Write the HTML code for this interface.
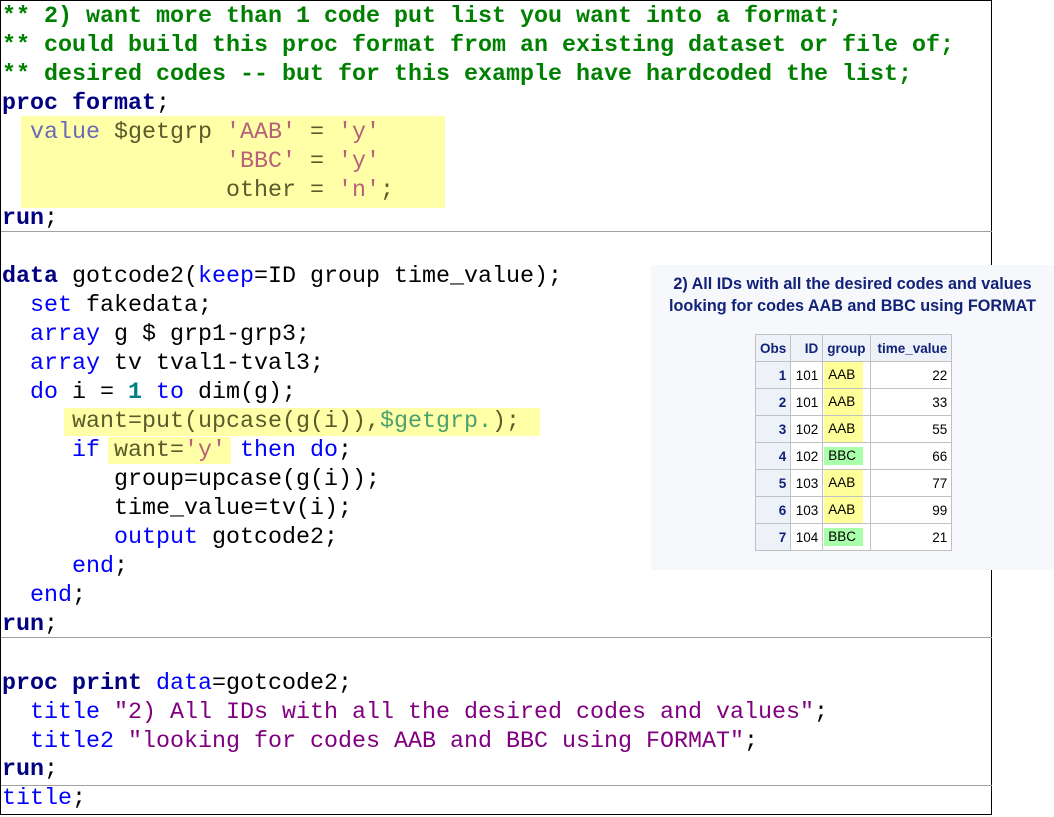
<!DOCTYPE html>
<html><head><meta charset="utf-8"><style>
html,body{margin:0;padding:0;background:#fff;width:1054px;height:817px;overflow:hidden;position:relative}
.frame{position:absolute;left:0;top:0;width:992px;height:815px;border:1px solid #000;box-sizing:border-box}
.sep{position:absolute;left:1px;width:991px;height:1px;background:#a0a0a0}
.l{position:absolute;left:2px;height:29px;line-height:29px;font-family:"Liberation Mono",monospace;font-size:23.33px;white-space:pre;color:#000}
.c{color:#008000;font-weight:bold}
.k{color:#000080;font-weight:bold}
.b{color:#0000ff}
.s{color:#800080}
.n{color:#008080;font-weight:bold}
.hl{position:absolute;background:#ffffa8}
.f{color:#5a5a2a}.fv{color:#6a6ab8}.fs{color:#b86078}.fg{color:#4aa070}
.panel{position:absolute;left:651px;top:265px;width:403px;height:305px;background:#f7f8fc}
.t{position:absolute;left:651px;width:403px;text-align:center;font-family:"Liberation Sans",sans-serif;font-weight:bold;font-size:16.2px;color:#112277}
table{position:absolute;left:755px;top:334px;border-collapse:collapse;font-family:"Liberation Sans",sans-serif;font-size:13.5px}
td,th{border:1px solid #c1c1c1;height:26px;padding:0 4px;text-align:right}
th{background:#edf2f9;color:#112277;font-weight:bold}
td.o{background:#edf2f9;color:#112277;font-weight:bold}
td.v{background:#fff;color:#000}
td.g{background:#fff;text-align:left;padding:0 4px 0 1px}
.y{display:inline-block;background:#ffff99;padding:2px 8px 2px 4px;line-height:22px}
.gr{display:inline-block;background:#aaffaa;padding:0 7px 0 4px;line-height:18px}
</style></head><body>
<div class="frame"></div>
<div class="sep" style="top:231px"></div>
<div class="sep" style="top:637px"></div>
<div class="sep" style="top:785px"></div>
<div class="hl" style="left:21px;top:116px;width:424px;height:92px"></div>
<div class="hl" style="left:64px;top:408px;width:476px;height:28px"></div>
<div class="hl" style="left:108px;top:437px;width:123px;height:27px"></div>

<div class="l c" style="top:3px">** 2) want more than 1 code put list you want into a format;</div>
<div class="l c" style="top:32px">** could build this proc format from an existing dataset or file of;</div>
<div class="l c" style="top:61px">** desired codes -- but for this example have hardcoded the list;</div>
<div class="l" style="top:90px"><span class="k">proc format</span>;</div>
<div class="l f" style="top:119px">  <span class="fv">value</span> $getgrp <span class="fs">'AAB'</span> = <span class="fs">'y'</span></div>
<div class="l f" style="top:148px">                <span class="fs">'BBC'</span> = <span class="fs">'y'</span></div>
<div class="l f" style="top:177px">                other = <span class="fs">'n'</span>;</div>
<div class="l" style="top:205px"><span class="k">run</span>;</div>
<div class="l" style="top:263px"><span class="k">data</span> gotcode2(<span class="b">keep</span>=ID group time_value);</div>
<div class="l" style="top:292px">  <span class="b">set</span> fakedata;</div>
<div class="l" style="top:321px">  <span class="b">array</span> g $ grp1-grp3;</div>
<div class="l" style="top:350px">  <span class="b">array</span> tv tval1-tval3;</div>
<div class="l" style="top:379px">  <span class="b">do</span> i = <span class="n">1</span> <span class="b">to</span> dim(g);</div>
<div class="l f" style="top:408px">     want=put(upcase(g(i)),<span class="fg">$getgrp.</span>);</div>
<div class="l" style="top:437px">     <span class="b">if</span> <span class="f">want=<span class="fs">'y'</span></span> <span class="b">then do</span>;</div>
<div class="l" style="top:466px">        group=upcase(g(i));</div>
<div class="l" style="top:495px">        time_value=tv(i);</div>
<div class="l" style="top:524px">        <span class="b">output</span> gotcode2;</div>
<div class="l" style="top:553px">     <span class="b">end</span>;</div>
<div class="l" style="top:582px">  <span class="b">end</span>;</div>
<div class="l" style="top:611px"><span class="k">run</span>;</div>
<div class="l" style="top:670px"><span class="k">proc print</span> <span class="b">data</span>=gotcode2;</div>
<div class="l" style="top:699px">  <span class="b">title</span> <span class="s">"2) All IDs with all the desired codes and values"</span>;</div>
<div class="l" style="top:728px">  <span class="b">title2</span> <span class="s">"looking for codes AAB and BBC using FORMAT"</span>;</div>
<div class="l" style="top:756px"><span class="k">run</span>;</div>
<div class="l" style="top:785px"><span class="b">title</span>;</div>

<div class="panel"></div>
<div class="t" style="top:275px">2) All IDs with all the desired codes and values</div>
<div class="t" style="top:297px">looking for codes AAB and BBC using FORMAT</div>
<table>
<tr><th style="width:26px">Obs</th><th style="width:23px">ID</th><th style="width:39px;text-align:left;padding-left:4px">group</th><th style="width:72px">time_value</th></tr>
<tr><td class="o">1</td><td class="v">101</td><td class="g"><span class="y">AAB</span></td><td class="v">22</td></tr>
<tr><td class="o">2</td><td class="v">101</td><td class="g"><span class="y">AAB</span></td><td class="v">33</td></tr>
<tr><td class="o">3</td><td class="v">102</td><td class="g"><span class="y">AAB</span></td><td class="v">55</td></tr>
<tr><td class="o">4</td><td class="v">102</td><td class="g"><span class="gr">BBC</span></td><td class="v">66</td></tr>
<tr><td class="o">5</td><td class="v">103</td><td class="g"><span class="y">AAB</span></td><td class="v">77</td></tr>
<tr><td class="o">6</td><td class="v">103</td><td class="g"><span class="y">AAB</span></td><td class="v">99</td></tr>
<tr><td class="o">7</td><td class="v">104</td><td class="g"><span class="gr">BBC</span></td><td class="v">21</td></tr>
</table>
</body></html>
